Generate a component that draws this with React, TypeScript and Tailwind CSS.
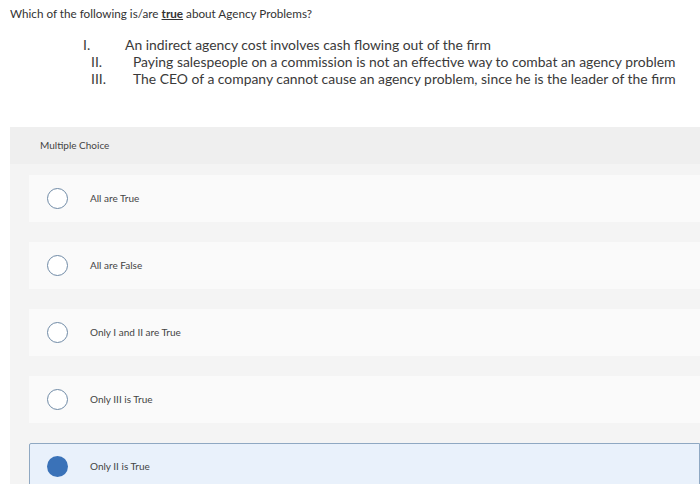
import React from "react";

const options = [
  { label: "All are True", selected: false },
  { label: "All are False", selected: false },
  { label: "Only I and II are True", selected: false },
  { label: "Only III is True", selected: false },
  { label: "Only II is True", selected: true },
];

export default function App() {
  return (
    <div className="w-[700px] h-[493px] overflow-hidden bg-white text-[#333]" style={{ fontFamily: "Lato, 'Open Sans', sans-serif" }}>
      <div className="pt-[5px] pl-[10px] text-[11.7px] leading-[16px]">
        Which of the following is/are <span className="font-bold underline">true</span> about Agency Problems?
      </div>
      <div className="mt-[15px] text-[13.9px] leading-[17px] text-[#3a3a3a]">
        <div className="flex">
          <span className="ml-[83px] w-[42px]">I.</span>
          <span>An indirect agency cost involves cash flowing out of the firm</span>
        </div>
        <div className="flex">
          <span className="ml-[91px] w-[42px]">II.</span>
          <span>Paying salespeople on a commission is not an effective way to combat an agency problem</span>
        </div>
        <div className="flex">
          <span className="ml-[91px] w-[42px]">III.</span>
          <span>The CEO of a company cannot cause an agency problem, since he is the leader of the firm</span>
        </div>
      </div>
      <div className="mt-[40px] ml-[10px] bg-[#f4f4f4] h-[357px] overflow-hidden">
        <div className="h-[37px] bg-[#efefef] flex items-center pl-[30px] text-[10px] text-[#444]">
          Multiple Choice
        </div>
        <div className="flex flex-col gap-[20px] pt-[11px] pl-[19px]">
          {options.map((o) => (
            <div
              key={o.label}
              className={
                o.selected
                  ? "h-[47px] flex items-center bg-[#e9f1fb] border border-[#8fa8c2] rounded-tl-[2px] pl-[17px]"
                  : "h-[47px] flex items-center bg-[#fafafa] pl-[18px]"
              }
            >
              {o.selected ? (
                <span className="w-[21px] h-[21px] rounded-full bg-[#3a72b8] shrink-0" />
              ) : (
                <span className="w-[21px] h-[21px] rounded-full border-[1.5px] border-[#6f8aa6] bg-white shrink-0" />
              )}
              <span className="ml-[22px] text-[10px] text-[#444]">{o.label}</span>
            </div>
          ))}
        </div>
      </div>
    </div>
  );
}
